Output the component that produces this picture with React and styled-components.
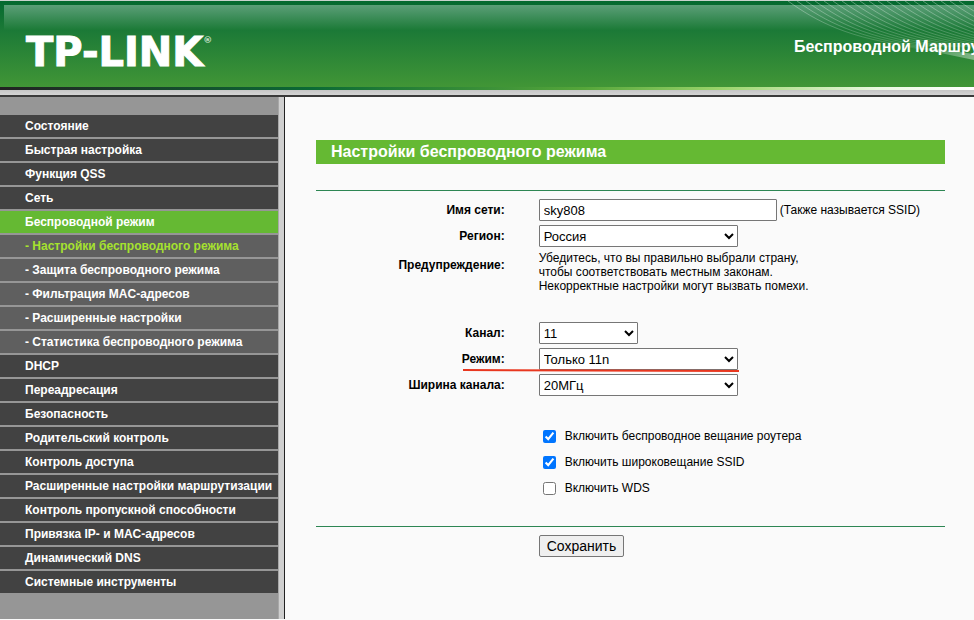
import React from "react";
import styled, { createGlobalStyle } from "styled-components";

const Global = createGlobalStyle`
  *, *::before, *::after { box-sizing: border-box; }
  body {
    margin: 0;
    background: #fafafa;
    color: #000;
    font: 12px/14px "Liberation Sans", Arial, sans-serif;
  }
`;

const Page = styled.div`
  display: flex;
  flex-direction: column;
  min-height: 100vh;
  padding-bottom: 1px;
`;

const Header = styled.header`
  position: relative;
  display: flex;
  align-items: center;
  justify-content: space-between;
  padding: 30px 0 13px 26px;
  border-top: 1px solid #c9d3cd;
  overflow: hidden;
  background: linear-gradient(#04692f 0, #1c7a37 30px, #419636 100%);

  &::before {
    content: "";
    position: absolute;
    inset: 4px 0 auto 4px;
    height: 25px;
    background: linear-gradient(#5b9f78, #1c7a37);
  }
`;

const Logo = styled.h1`
  position: relative;
  display: flex;
  align-items: flex-start;
  margin: 0;
  color: #fff;
  font: bold 40px/43px "DejaVu Sans", sans-serif;
  -webkit-text-stroke: 1px #fff;

  sup {
    font: bold 9px/18px "DejaVu Sans", sans-serif;
    -webkit-text-stroke: 0;
    color: #d5e8d5;
  }
`;

const Model = styled.div`
  position: relative;
  flex: 0 0 180px;
  min-width: 0;
  padding-bottom: 12px;
  white-space: nowrap;
  color: #fff;
  font-size: 16px;
  line-height: 20px;
  font-weight: bold;
`;

const Swirl = styled.svg`
  position: absolute;
  top: 0;
  right: 0;
`;

const HeaderRule = styled.div`
  height: 10px;
  border-bottom: 2px solid #3a3a3a;
  background:
    linear-gradient(90deg, #222 0, #0b6a35 32%, #56a63a 60%, #9bd46c 74%, #e9f8df 90%, #fff 100%) 0 0 / 100% 3px no-repeat,
    linear-gradient(#bdbdbd, #d4d4d4);
`;

const Body = styled.div`
  display: flex;
  flex: 1;
`;

const Sidebar = styled.nav`
  flex: 0 0 285px;
  padding-top: 18px;
  background: #969696;
  border-right: 1px solid #222;
  box-shadow: inset -5px 0 #cfcfcf, inset -6px 0 #a8a8a8;
`;

const Menu = styled.ul`
  display: flex;
  flex-direction: column;
  gap: 2px;
  margin: 0 6px 0 0;
  padding: 0;
  list-style: none;
`;

const tones = {
  top: ["#424242", "#fff"],
  active: ["#65b933", "#fff"],
  sub: ["#5f5f5f", "#fff"],
  subActive: ["#5f5f5f", "#a6e22e"],
};

const MenuLink = styled.a`
  display: block;
  padding-left: 25px;
  line-height: 22px;
  font-weight: bold;
  white-space: nowrap;
  text-decoration: none;
  background: ${({ $tone }) => tones[$tone][0]};
  color: ${({ $tone }) => tones[$tone][1]};
`;

const Content = styled.main`
  flex: 1;
  min-width: 0;
  padding: 43px 29px 24px 31px;
`;

const Title = styled.h2`
  margin: 0 0 26px;
  padding-left: 15px;
  background: #65b933;
  color: #fff;
  font-size: 16px;
  line-height: 24px;
`;

const Form = styled.form`
  display: flex;
  flex-direction: column;
`;

const Fields = styled.div`
  display: flex;
  flex-direction: column;
  gap: 4px;
  padding: 8px 0 27px;
  border-top: 1px solid #2d8653;
  border-bottom: 1px solid #2d8653;
`;

const Row = styled.div`
  display: grid;
  grid-template-columns: 30% 1fr;
  column-gap: 34px;
  align-items: center;
  min-height: 22px;
  margin-top: ${({ $gap }) => $gap || 0}px;
`;

const labelText = `
  font-weight: bold;
  text-align: right;
`;

const Label = styled.label`${labelText}`;
const Caption = styled.div`
  ${labelText}
  align-self: start;
  padding-top: 7px;
`;

const Field = styled.div`
  position: relative;
  display: flex;
  align-items: center;
  gap: 3px;
`;

const TextInput = styled.input`
  width: 238px;
  height: 22px;
  padding: 1px 4px;
  border: 1px solid #767676;
  border-radius: 1px;
  background: #fff;
  font: 13px "Liberation Sans", Arial, sans-serif;
`;

const Select = styled.select`
  width: ${({ $short }) => ($short ? 99 : 199)}px;
  height: 22px;
  border: 1px solid #767676;
  border-radius: 1px;
  background: #fff;
  color: #000;
  font: 13px "Liberation Sans", Arial, sans-serif;
`;

const Warning = styled.p`
  margin: 0;
`;

const Underline = styled.svg`
  position: absolute;
  left: -76px;
  top: 20px;
`;

const CheckLabel = styled.label`
  grid-column: 2;
  display: flex;
  align-items: center;
  gap: 9px;
  padding-left: 4px;
`;

const Checkbox = styled.input`
  width: 13px;
  height: 13px;
  margin: 0;
  accent-color: #0075ff;
`;

const Actions = styled(Row)`
  margin-top: 8px;
`;

const Save = styled.button`
  grid-column: 2;
  justify-self: start;
  height: 22px;
  padding: 0 7px;
  border: 1px solid #767676;
  border-radius: 2px;
  background: #efefef;
  color: #000;
  font: 14px "Liberation Sans", Arial, sans-serif;
`;

const menu = [
  ["Состояние", "top"],
  ["Быстрая настройка", "top"],
  ["Функция QSS", "top"],
  ["Сеть", "top"],
  ["Беспроводной режим", "active"],
  ["- Настройки беспроводного режима", "subActive"],
  ["- Защита беспроводного режима", "sub"],
  ["- Фильтрация MAC-адресов", "sub"],
  ["- Расширенные настройки", "sub"],
  ["- Статистика беспроводного режима", "sub"],
  ["DHCP", "top"],
  ["Переадресация", "top"],
  ["Безопасность", "top"],
  ["Родительский контроль", "top"],
  ["Контроль доступа", "top"],
  ["Расширенные настройки маршрутизации", "top"],
  ["Контроль пропускной способности", "top"],
  ["Привязка IP- и MAC-адресов", "top"],
  ["Динамический DNS", "top"],
  ["Системные инструменты", "top"],
];

function SelectRow({ id, label, value, short, gap, children }) {
  return (
    <Row $gap={gap}>
      <Label htmlFor={id}>{label}</Label>
      <Field>
        <Select id={id} $short={short} defaultValue={value}>
          <option>{value}</option>
        </Select>
        {children}
      </Field>
    </Row>
  );
}

function CheckRow({ label, checked, gap }) {
  return (
    <Row $gap={gap}>
      <CheckLabel>
        <Checkbox type="checkbox" defaultChecked={checked} />
        {label}
      </CheckLabel>
    </Row>
  );
}

const waves = Array.from({ length: 20 }, (_, i) => 4 + i * 9);

export default function App() {
  return (
    <Page>
      <Global />
      <Header>
        <Swirl width="190" height="70" viewBox="0 0 190 70" fill="none" aria-hidden="true">
          <defs>
            <linearGradient id="beam" x1="0" x2="1">
              <stop offset="0" stopColor="#fff" stopOpacity="0" />
              <stop offset="1" stopColor="#fff" stopOpacity="0.4" />
            </linearGradient>
            <linearGradient id="wave" gradientUnits="userSpaceOnUse" x1="0" y1="0" x2="0" y2="46">
              <stop offset="0" stopColor="#fff" stopOpacity="0.34" />
              <stop offset="1" stopColor="#fff" stopOpacity="0.14" />
            </linearGradient>
          </defs>
          {waves.map((x) => (
            <path key={x} d={`M${x} 0 C${x + 28} 20 ${x + 60} 38 ${x + 130} 46`} stroke="url(#wave)" />
          ))}
          <path d="M110 44 Q150 47 190 53 V59 Q150 50 110 44Z" fill="url(#beam)" />
        </Swirl>
        <Logo>
          TP-LINK<sup>®</sup>
        </Logo>
        <Model>Беспроводной Маршру</Model>
      </Header>
      <HeaderRule />
      <Body>
        <Sidebar>
          <Menu>
            {menu.map(([text, tone]) => (
              <li key={text}>
                <MenuLink href="#" $tone={tone}>{text}</MenuLink>
              </li>
            ))}
          </Menu>
        </Sidebar>
        <Content>
          <Title>Настройки беспроводного режима</Title>
          <Form onSubmit={(e) => e.preventDefault()}>
            <Fields>
              <Row>
                <Label htmlFor="ssid">Имя сети:</Label>
                <Field>
                  <TextInput id="ssid" defaultValue="sky808" />
                  <span>(Также называется SSID)</span>
                </Field>
              </Row>
              <SelectRow id="region" label="Регион:" value="Россия" />
              <Row>
                <Caption>Предупреждение:</Caption>
                <Warning>
                  Убедитесь, что вы правильно выбрали страну,
                  <br />
                  чтобы соответствовать местным законам.
                  <br />
                  Некорректные настройки могут вызвать помехи.
                </Warning>
              </Row>
              <SelectRow id="channel" label="Канал:" value="11" short gap={25} />
              <SelectRow id="mode" label="Режим:" value="Только 11n">
                <Underline width="276" height="5" viewBox="0 0 276 5" aria-hidden="true">
                  <path d="M0 2 L276 3" stroke="#e8371f" strokeWidth="2" />
                </Underline>
              </SelectRow>
              <SelectRow id="width" label="Ширина канала:" value="20МГц" />
              <CheckRow label="Включить беспроводное вещание роутера" checked gap={25} />
              <CheckRow label="Включить широковещание SSID" checked />
              <CheckRow label="Включить WDS" />
            </Fields>
            <Actions>
              <Save type="submit">Сохранить</Save>
            </Actions>
          </Form>
        </Content>
      </Body>
    </Page>
  );
}
